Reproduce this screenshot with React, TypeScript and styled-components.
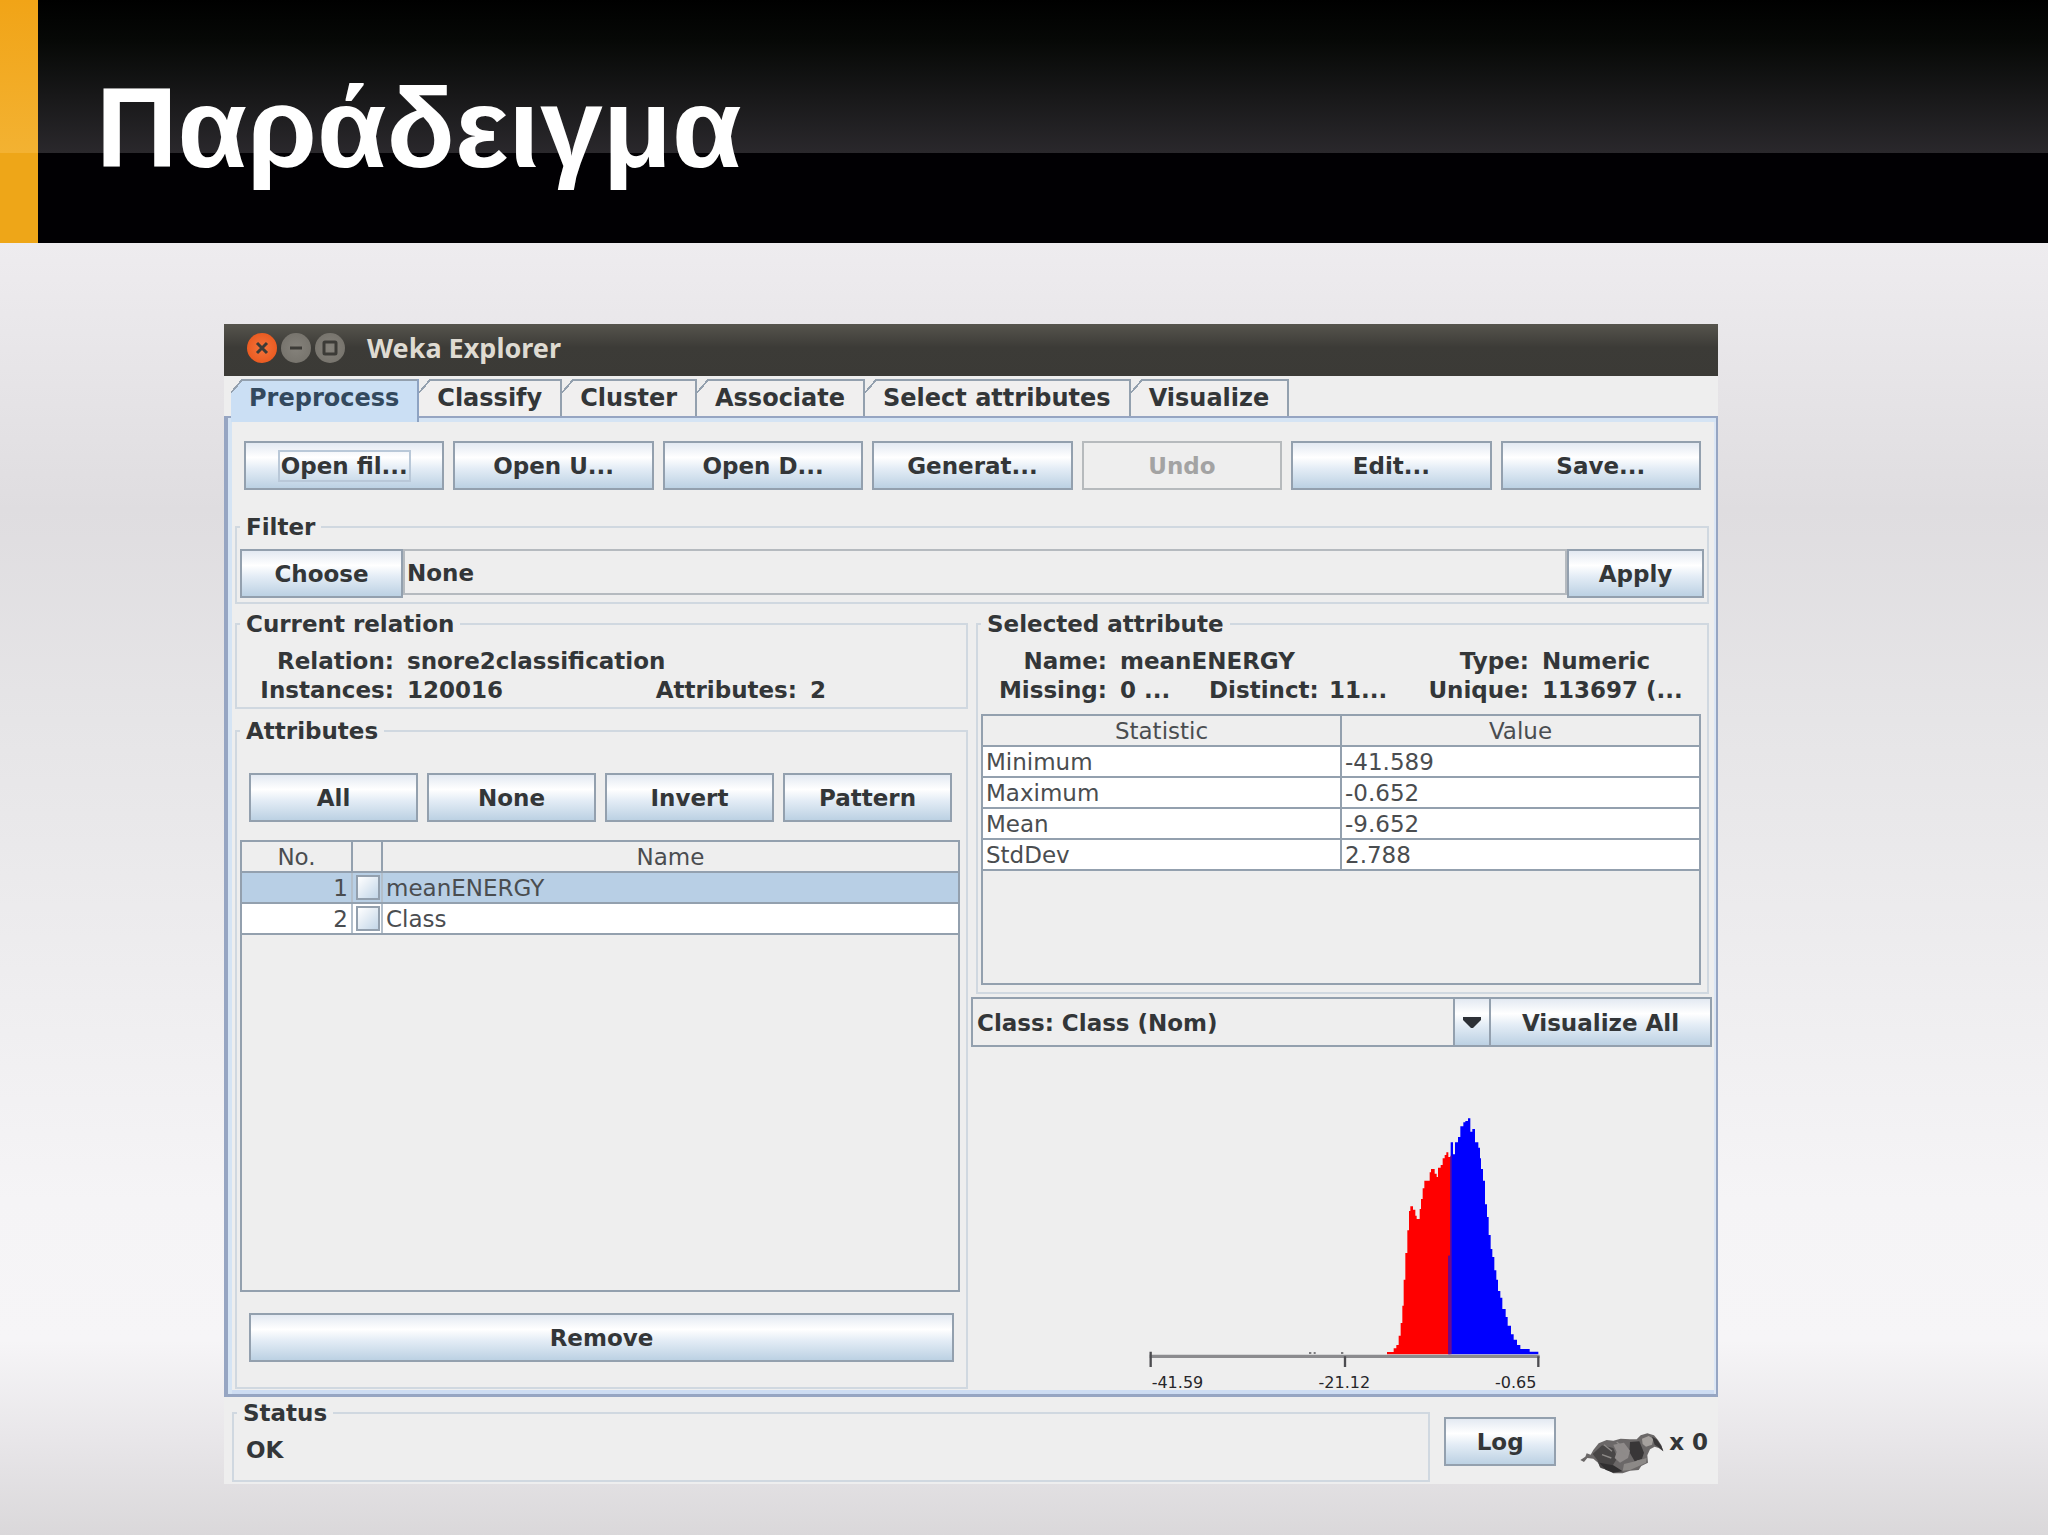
import React, { useState } from "react";
import styled, { createGlobalStyle, css } from "styled-components";

const line = "#93a0ae";
const panel = "#eeeeee";
const glossy = "linear-gradient(#e3e9f2 0%, #ffffff 32%, #e4edf6 56%, #bcd1e3 100%)";

const GlobalStyle = createGlobalStyle`
  * { box-sizing: border-box; }
  body { margin: 0; background: #e4e2e4; }
  button, input, select { font: inherit; color: inherit; }
`;

const Slide = styled.main`
  min-height: 100vh;
  background: linear-gradient(#eeecef 243px, #dfdde0 510px, #e6e5e7 720px, #efeef0 1000px, #f5f4f6 1200px, #f6f5f7 1340px, #e8e6e9 1440px, #dad8da 1535px);
`;

const Banner = styled.header`
  display: flex;
  background: linear-gradient(#000000 0, #060806 40px, #2a282c 153px, #010003 153px, #010003 100%);
  &::before {
    content: "";
    flex: none;
    width: 38px;
    background: linear-gradient(#f1a417 0, #f3b232 153px, #eea618 153px, #eea618 100%);
  }
`;

const Heading = styled.h1`
  margin: 0;
  padding: 62px 58px 49px;
  font: bold 113px/132px "Liberation Sans", Arial, sans-serif;
  color: #ffffff;
`;

const Window = styled.section`
  margin: 81px 330px 0 224px;
  font: bold 23px/29px "DejaVu Sans", Verdana, sans-serif;
  color: #333638;
  background: ${panel};
`;

const TitleBar = styled.div`
  display: flex;
  align-items: center;
  gap: 4px;
  height: 52px;
  padding: 0 23px 4px;
  background: linear-gradient(#56544d, #3c3b37 45%, #3b3a36);
`;

const WindowTitle = styled.h2`
  margin: 0 0 0 18px;
  font: bold 27px/32px "Noto Sans", "Open Sans", sans-serif;
  color: #dfdbd2;
`;

const RoundButton = styled.button<{ $close?: boolean }>`
  display: flex;
  width: 30px;
  height: 30px;
  padding: 0;
  border: 0;
  border-radius: 50%;
  color: #3c3b37;
  background: ${(p) => (p.$close ? "radial-gradient(#f4743c, #ea5a20 75%, #b5451a)" : "radial-gradient(#85827b, #77746d 75%, #5a5852)")};
`;

const TabStrip = styled.div`
  display: flex;
  height: 40px;
  padding: 3px 0 0 7px;
`;

const Tab = styled.button<{ $active: boolean }>`
  position: relative;
  height: ${(p) => (p.$active ? 43 : 37)}px;
  padding: 2px 18px ${(p) => (p.$active ? 6 : 0)}px;
  border: 0;
  border-right: 2px solid ${(p) => (p.$active ? "#8ea3c2" : line)};
  font-size: 24px;
  font-weight: bold;
  white-space: nowrap;
  color: ${(p) => (p.$active ? "#33495e" : "inherit")};
  background:
    linear-gradient(to bottom right, ${panel} 44%, ${line} 44% 54%, transparent 54%) 0 0 / 12px 14px no-repeat,
    linear-gradient(${line}, ${line}) 12px 0 / 100% 2px no-repeat,
    ${(p) => (p.$active ? "#cbdff4" : "#f0efef")};
`;

const TabPanel = styled.div`
  padding: 19px 7px 5px;
  border: solid #96a5c2;
  border-width: 2px 2px 3px 4px;
  box-shadow: inset 0 4px #d5e4f4, inset 4px 0 #d5e4f4, inset -2px 0 #dbe6f5, inset 0 -4px #cddcf2;
`;

const PushButton = styled.button`
  height: 49px;
  min-width: 0;
  padding: 2px 8px 0;
  border: 2px solid ${line};
  font-weight: bold;
  white-space: nowrap;
  background: ${glossy};
  &:disabled {
    color: #a3a3a3;
    border-color: #b6babd;
    background: ${panel};
  }
`;

const FocusText = styled.span<{ $focused?: boolean }>`
  ${(p) => p.$focused && css`
    outline: 2px solid #b9c8d8;
    outline-offset: 1px;
  `}
`;

const FileButtons = styled.div`
  display: grid;
  grid-template-columns: repeat(7, 1fr);
  gap: 9px;
  padding: 4px 8px 24px 9px;
`;

const ButtonRow = styled.div`
  display: grid;
  grid-template-columns: repeat(4, 1fr);
  gap: 9px;
  margin: 0 11px 18px 9px;
`;

const Group = styled.fieldset<{ $top: number; $bottom: number; $fill?: boolean }>`
  display: flex;
  flex-direction: column;
  flex: ${(p) => (p.$fill ? "1" : "none")};
  min-width: 0;
  margin: 0;
  padding: ${(p) => p.$top}px 3px ${(p) => p.$bottom}px;
  border: 2px solid #d0d8e0;
`;

const GroupTitle = styled.legend`
  padding: 0 6px;
  line-height: 26px;
`;

const FilterRow = styled.div`
  display: flex;
  align-items: flex-start;
`;

const ChooseButton = styled(PushButton)`
  width: 163px;
`;

const ApplyButton = styled(PushButton)`
  width: 137px;
`;

const FilterField = styled.input`
  flex: 1;
  min-width: 0;
  height: 46px;
  padding: 2px 2px 0;
  border: 2px solid #b5babf;
  font-weight: bold;
  background: ${panel};
`;

const Columns = styled.div`
  display: grid;
  grid-template-columns: 1fr 1fr;
  gap: 8px;
  margin-top: 7px;
`;

const Column = styled.div<{ $gap: number }>`
  display: flex;
  flex-direction: column;
  gap: ${(p) => p.$gap}px;
  min-width: 0;
`;

const Facts = styled.dl<{ $columns: string }>`
  display: grid;
  grid-template-columns: ${(p) => p.$columns};
  column-gap: 13px;
  margin: 0;
  white-space: nowrap;
`;

const Label = styled.dt`
  text-align: right;
`;

const Value = styled.dd<{ $span?: number }>`
  grid-column: span ${(p) => p.$span ?? 1};
  margin: 0;
`;

const TablePane = styled.div<{ $height: number; $above?: number }>`
  min-height: ${(p) => p.$height}px;
  margin: ${(p) => p.$above ?? 0}px 3px 0 0;
  border: 2px solid ${line};
`;

const Table = styled.table`
  width: 100%;
  border-collapse: collapse;
  table-layout: fixed;
  font: 23px/26px "DejaVu Sans", Verdana, sans-serif;
  color: #4a4d50;
  th {
    height: 30px;
    padding: 0;
    font-weight: normal;
  }
  td {
    height: 31px;
    padding: 0 3px;
    background: #ffffff;
  }
  th, td { border: solid ${line}; border-width: 0 0 2px 2px; }
  th:first-child, td:first-child { border-left: 0; }
`;

const AttributeRow = styled.tr<{ $selected: boolean }>`
  td { border-left-color: #b3bfcb; }
  && td { background: ${(p) => (p.$selected ? "#b8cfe5" : "#ffffff")}; }
  td:first-child { text-align: right; }
`;

const Tick = styled.input`
  display: block;
  appearance: none;
  width: 24px;
  height: 25px;
  margin: 0;
  border: 2px solid ${line};
  background: linear-gradient(135deg, #ffffff, #c3d6e8);
`;

const RemoveButton = styled(PushButton)`
  margin: 21px 9px 0;
`;

const ClassRow = styled.div`
  display: flex;
  margin: 0 -3px 0 -5px;
`;

const SelectBox = styled.div`
  display: grid;
  grid-template-columns: 1fr 36px;
  flex: 1;
  height: 50px;
  border: 2px solid ${line};
  border-right: 0;
`;

const ClassSelect = styled.select`
  grid-area: 1 / 1 / 2 / 3;
  appearance: none;
  padding: 2px 38px 0 4px;
  border: 0;
  border-radius: 0;
  font-weight: bold;
  background: ${panel};
`;

const SelectArrow = styled.span`
  grid-area: 1 / 2;
  display: flex;
  align-items: center;
  justify-content: center;
  border-left: 2px solid ${line};
  background: ${glossy};
  pointer-events: none;
`;

const VisualizeButton = styled(PushButton)`
  width: 223px;
  height: 50px;
`;

const ChartArea = styled.div`
  display: flex;
  flex: 1;
  align-items: flex-end;
  justify-content: center;
  margin-bottom: -5px;
`;

const StatusBar = styled.footer`
  display: flex;
  align-items: flex-start;
  padding: 3px 10px 2px 8px;
`;

const StatusGroup = styled(Group)`
  flex: 1;
`;

const StatusText = styled.output`
  padding-left: 9px;
`;

const LogButton = styled(PushButton)`
  width: 112px;
  margin: 17px 24px 0 14px;
`;

const BirdCount = styled.div`
  display: flex;
  gap: 4px;
  padding-top: 28px;
  svg { margin-top: 4px; }
`;

const tabs = ["Preprocess", "Classify", "Cluster", "Associate", "Select attributes", "Visualize"];
const fileActions = ["Open fil...", "Open U...", "Open D...", "Generat...", "Undo", "Edit...", "Save..."];
const statistics = [
  ["Minimum", "-41.589"],
  ["Maximum", "-0.652"],
  ["Mean", "-9.652"],
  ["StdDev", "2.788"],
];

function Histogram() {
  return (
    <svg width="440" height="305" viewBox="-24 0 1320 915" role="img" aria-label="Distribution of meanENERGY by class">
      <path
        fill="#ff0000"
        d="M768 796V789H788V778H796V768H803V740H809V702H814V650H818V572H823V492H829V424H834V366H838V352H846V362H853V380H857V390H866V360H870V330H875V298H880V275H896V250H900V240H911V254H917V264H921V236H929V228H935V208H941V198H946V190H952V204H958V796Z"
      />
      <path
        fill="#0000ff"
        d="M952 796V500H957V204H959V160H966V196H972V160H981V144H988V112H997V100H1003V96H1011V88H1018V128H1024V120H1032V160H1042V176H1047V208H1050V240H1056V275H1062V346H1068V384H1073V438H1079V480H1084V504H1090V544H1096V572H1101V606H1108V626H1114V660H1124V684H1130V710H1140V736H1148V752H1158V768H1168V780H1196V788H1222V796Z"
      />
      <path fill="#951060" d="M952 500H957V200H962V796H952Z" opacity=".7" />
      <path fill="none" stroke="#8b8b8e" strokeWidth="10" d="M56 802H1226" />
      <path fill="none" stroke="#4c4c50" strokeWidth="7" d="M59 788V834M642 802V834M1222 802V834" />
      <path fill="none" stroke="#55555a" strokeWidth="5" d="M534 792H541M548 792H554M630 792H637" />
      <g fontFamily="DejaVu Sans, sans-serif" fontSize="48" fontWeight="normal" fill="#26262a">
        <text x="62" y="898">-41.59</text>
        <text x="640" y="898" textAnchor="middle">-21.12</text>
        <text x="1216" y="898" textAnchor="end">-0.65</text>
      </g>
    </svg>
  );
}

function Bird() {
  return (
    <svg width="85" height="44" viewBox="540 184 255 132" aria-hidden="true">
      <path fill="#6b6868" d="M541 268L556 258 560 248 572 252 580 238 596 218 620 208 640 210 662 204 690 206 710 206 722 194 742 188 762 194 774 208 784 224 790 242 776 232 764 228 750 236 742 254 744 276 724 286 716 298 690 300 668 308 640 308 622 298 602 292 594 276 580 264 562 262 552 274Z" />
      <path fill="#484646" d="M578 250L606 224 640 232 652 262 628 300 600 290 592 268Z" />
      <path fill="#383637" d="M690 214L718 212 732 246 726 264 704 272 688 244Z" />
      <path fill="#8f8b8a" d="M640 222L672 216 690 240 684 262 660 276 644 262 650 244Z" />
      <path fill="#302f30" d="M598 276L640 284 668 302 640 306 618 298Z" />
      <path fill="#8c8987" d="M672 280L706 272 740 262 738 276 712 288 690 298 668 300Z" />
      <path fill="#a5a19e" d="M726 204L746 196 760 204 756 222 738 228 728 220Z" />
      <path fill="#3a3839" d="M756 198L770 206 784 226 790 242 776 230 764 222Z" />
      <path fill="none" stroke="#8e8b89" strokeWidth="4" d="M612 222L636 242M606 252L634 262M650 214L664 226M660 238L676 252M700 280L716 270" />
    </svg>
  );
}

export default function App() {
  const [active, setActive] = useState(tabs[0]);
  return (
    <>
      <GlobalStyle />
      <Slide>
        <Banner>
          <Heading>Παράδειγμα</Heading>
        </Banner>
        <Window>
          <TitleBar>
            <RoundButton $close aria-label="Close">
              <svg viewBox="0 0 30 30" fill="none" stroke="currentColor" strokeWidth="3"><path d="M10 10l10 10M20 10L10 20" /></svg>
            </RoundButton>
            <RoundButton aria-label="Minimize">
              <svg viewBox="0 0 30 30" fill="none" stroke="currentColor" strokeWidth="3"><path d="M9 15h12" /></svg>
            </RoundButton>
            <RoundButton aria-label="Maximize">
              <svg viewBox="0 0 30 30" fill="none" stroke="currentColor" strokeWidth="3"><rect x="9" y="9" width="12" height="12" rx="1" /></svg>
            </RoundButton>
            <WindowTitle>Weka Explorer</WindowTitle>
          </TitleBar>
          <TabStrip role="tablist">
            {tabs.map((t) => (
              <Tab key={t} role="tab" aria-selected={t === active} $active={t === active} onClick={() => setActive(t)}>
                {t}
              </Tab>
            ))}
          </TabStrip>
          <TabPanel role="tabpanel">
            <FileButtons>
              {fileActions.map((a, i) => (
                <PushButton key={a} disabled={a === "Undo"}>
                  <FocusText $focused={i === 0}>{a}</FocusText>
                </PushButton>
              ))}
            </FileButtons>
            <Group $top={9} $bottom={4}>
              <GroupTitle>Filter</GroupTitle>
              <FilterRow>
                <ChooseButton>Choose</ChooseButton>
                <FilterField aria-label="Filter" defaultValue="None" />
                <ApplyButton>Apply</ApplyButton>
              </FilterRow>
            </Group>
            <Columns>
              <Column $gap={9}>
                <Group $top={10} $bottom={2}>
                  <GroupTitle>Current relation</GroupTitle>
                  <Facts $columns="154px 234px 143px 1fr">
                    <Label>Relation:</Label>
                    <Value $span={3}>snore2classification</Value>
                    <Label>Instances:</Label>
                    <Value>120016</Value>
                    <Label>Attributes:</Label>
                    <Value>2</Value>
                  </Facts>
                </Group>
                <Group $top={29} $bottom={25} $fill>
                  <GroupTitle>Attributes</GroupTitle>
                  <ButtonRow>
                    <PushButton>All</PushButton>
                    <PushButton>None</PushButton>
                    <PushButton>Invert</PushButton>
                    <PushButton>Pattern</PushButton>
                  </ButtonRow>
                  <TablePane $height={452}>
                    <Table>
                      <colgroup>
                        <col width="110" />
                        <col width="30" />
                        <col />
                      </colgroup>
                      <thead>
                        <tr>
                          <th>No.</th>
                          <th></th>
                          <th>Name</th>
                        </tr>
                      </thead>
                      <tbody>
                        {["meanENERGY", "Class"].map((name, i) => (
                          <AttributeRow key={name} $selected={i === 0}>
                            <td>{i + 1}</td>
                            <td>
                              <Tick type="checkbox" aria-label={name} />
                            </td>
                            <td>{name}</td>
                          </AttributeRow>
                        ))}
                      </tbody>
                    </Table>
                  </TablePane>
                  <RemoveButton>Remove</RemoveButton>
                </Group>
              </Column>
              <Column $gap={3}>
                <Group $top={10} $bottom={7}>
                  <GroupTitle>Selected attribute</GroupTitle>
                  <Facts $columns="126px 76px 107px 80px 107px 1fr">
                    <Label>Name:</Label>
                    <Value $span={3}>meanENERGY</Value>
                    <Label>Type:</Label>
                    <Value>Numeric</Value>
                    <Label>Missing:</Label>
                    <Value>0 ...</Value>
                    <Label>Distinct:</Label>
                    <Value>11...</Value>
                    <Label>Unique:</Label>
                    <Value>113697 (...</Value>
                  </Facts>
                  <TablePane $height={271} $above={9}>
                    <Table>
                      <thead>
                        <tr>
                          <th>Statistic</th>
                          <th>Value</th>
                        </tr>
                      </thead>
                      <tbody>
                        {statistics.map(([name, value]) => (
                          <tr key={name}>
                            <td>{name}</td>
                            <td>{value}</td>
                          </tr>
                        ))}
                      </tbody>
                    </Table>
                  </TablePane>
                </Group>
                <ClassRow>
                  <SelectBox>
                    <ClassSelect aria-label="Class attribute">
                      <option>Class: Class (Nom)</option>
                    </ClassSelect>
                    <SelectArrow>
                      <svg width="18" height="11" viewBox="0 0 18 11"><path fill="#2c3036" d="M0 0H18V3L10 11H8L0 3Z" /></svg>
                    </SelectArrow>
                  </SelectBox>
                  <VisualizeButton>Visualize All</VisualizeButton>
                </ClassRow>
                <ChartArea>
                  <Histogram />
                </ChartArea>
              </Column>
            </Columns>
          </TabPanel>
          <StatusBar>
            <StatusGroup $top={10} $bottom={15}>
              <GroupTitle>Status</GroupTitle>
              <StatusText>OK</StatusText>
            </StatusGroup>
            <LogButton>Log</LogButton>
            <BirdCount>
              <Bird />
              x 0
            </BirdCount>
          </StatusBar>
        </Window>
      </Slide>
    </>
  );
}
